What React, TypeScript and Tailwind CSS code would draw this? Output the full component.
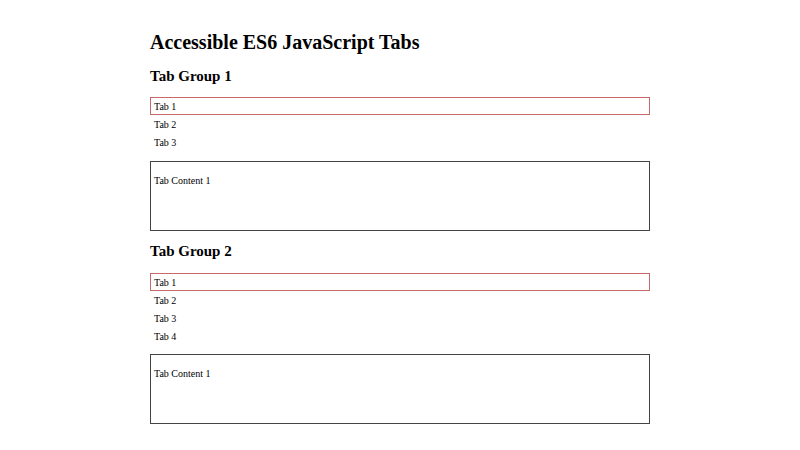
import React, { useState } from "react";

function TabGroup({ title, tabs, first }: { title: string; tabs: string[]; first?: boolean }) {
  const [active, setActive] = useState(0);
  return (
    <section>
      <h2 className={`text-[15px] leading-[18px] font-bold ${first ? "mt-[13px]" : "mt-[11px]"}`}>{title}</h2>
      <div role="tablist" className={`${first ? "mt-[12px]" : "mt-[13px]"} flex flex-col`}>
        {tabs.map((t, i) => (
          <button
            key={t}
            role="tab"
            aria-selected={active === i}
            onClick={() => setActive(i)}
            className={`h-[18px] text-left px-[3px] pt-[1px] text-[10px] leading-[14px] border cursor-pointer ${
              active === i ? "border-[#c96a6a]" : "border-transparent"
            }`}
          >
            {t}
          </button>
        ))}
      </div>
      <div
        role="tabpanel"
        className={`${first ? "mt-[10px]" : "mt-[9px]"} h-[70px] border border-[#444] px-[3px] pt-[12px] text-[10px] leading-[14px]`}
      >
        Tab Content {active + 1}
      </div>
    </section>
  );
}

export default function App() {
  return (
    <div
      className="w-[800px] h-[450px] bg-white text-black overflow-hidden"
      style={{ fontFamily: '"Liberation Serif", "Times New Roman", serif' }}
    >
      <div className="w-[500px] mx-auto pt-[30px]">
        <h1 className="text-[20px] leading-[24px] font-bold">Accessible ES6 JavaScript Tabs</h1>
        <TabGroup first title="Tab Group 1" tabs={["Tab 1", "Tab 2", "Tab 3"]} />
        <TabGroup title="Tab Group 2" tabs={["Tab 1", "Tab 2", "Tab 3", "Tab 4"]} />
      </div>
    </div>
  );
}
